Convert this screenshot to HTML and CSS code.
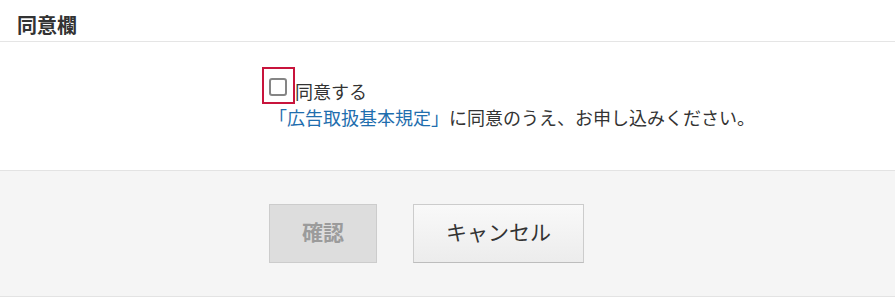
FILE: index.html
```html
<!DOCTYPE html>
<html lang="ja">
<head>
<meta charset="utf-8">
<title>同意欄</title>
<link rel="stylesheet" href="styles.css">
</head>
<body>
<div class="panel">
  <h2 class="panel-title">同意欄</h2>
  <div class="agree">
    <div class="agree-row">
      <label class="check-frame"><input type="checkbox" class="check"></label>
      <span class="agree-label">同意する</span>
    </div>
    <p class="agree-note"><a href="#" class="rule-link">「広告取扱基本規定」</a>に同意のうえ、お申し込みください。</p>
  </div>
  <div class="actions">
    <button class="btn btn-confirm" disabled>確認</button>
    <button class="btn btn-cancel">キャンセル</button>
  </div>
</div>
</body>
</html>
```
FILE: styles.css
```css
html, body {
  margin: 0;
  padding: 0;
  background: #ffffff;
}
body {
  font-family: "Noto Sans CJK JP", "Noto Sans", sans-serif;
  color: #333333;
}
.panel-title {
  margin: 0;
  padding: 13px 17px 4px;
  font-size: 20px;
  line-height: 24px;
  font-weight: bold;
  color: #333333;
  border-bottom: 1px solid #e5e5e5;
}
.agree {
  padding: 25px 0 40px 269px;
  font-size: 18px;
}
.agree-row {
  display: flex;
  align-items: flex-end;
}
.check-frame {
  display: block;
  box-sizing: border-box;
  margin-left: -7px;
  width: 33px;
  height: 37px;
  padding: 9px 0 0 5px;
  border: 2px solid #c8143c;
}
.check {
  appearance: none;
  -webkit-appearance: none;
  display: block;
  margin: 0;
  width: 18px;
  height: 18px;
  box-sizing: border-box;
  border: 2px solid #858585;
  border-radius: 3px;
  background: #ffffff;
}
.agree-label {
  line-height: 26px;
  color: #333333;
}
.agree-note {
  margin: 0;
  line-height: 26px;
  color: #333333;
}
.rule-link {
  color: #1f6eae;
  text-decoration: none;
}
.actions {
  display: flex;
  gap: 36px;
  padding: 33px 0 33px 269px;
  background: #f5f5f5;
  border-top: 1px solid #e3e3e3;
  border-bottom: 1px solid #e3e3e3;
}
.btn {
  box-sizing: border-box;
  height: 59px;
  margin: 0;
  font-family: "Noto Sans CJK JP", "Noto Sans", sans-serif;
  font-size: 21px;
  border-radius: 0;
  padding: 0 0 5px;
}
.btn-confirm {
  width: 108px;
  background: #dddddd;
  border: 1px solid #cccccc;
  color: #9b9b9b;
  font-weight: bold;
}
.btn-cancel {
  width: 171px;
  background: linear-gradient(#f9f9f9, #ececec);
  border: 1px solid #cccccc;
  border-bottom-color: #bdbdbd;
  color: #333333;
  font-weight: normal;
}
```
